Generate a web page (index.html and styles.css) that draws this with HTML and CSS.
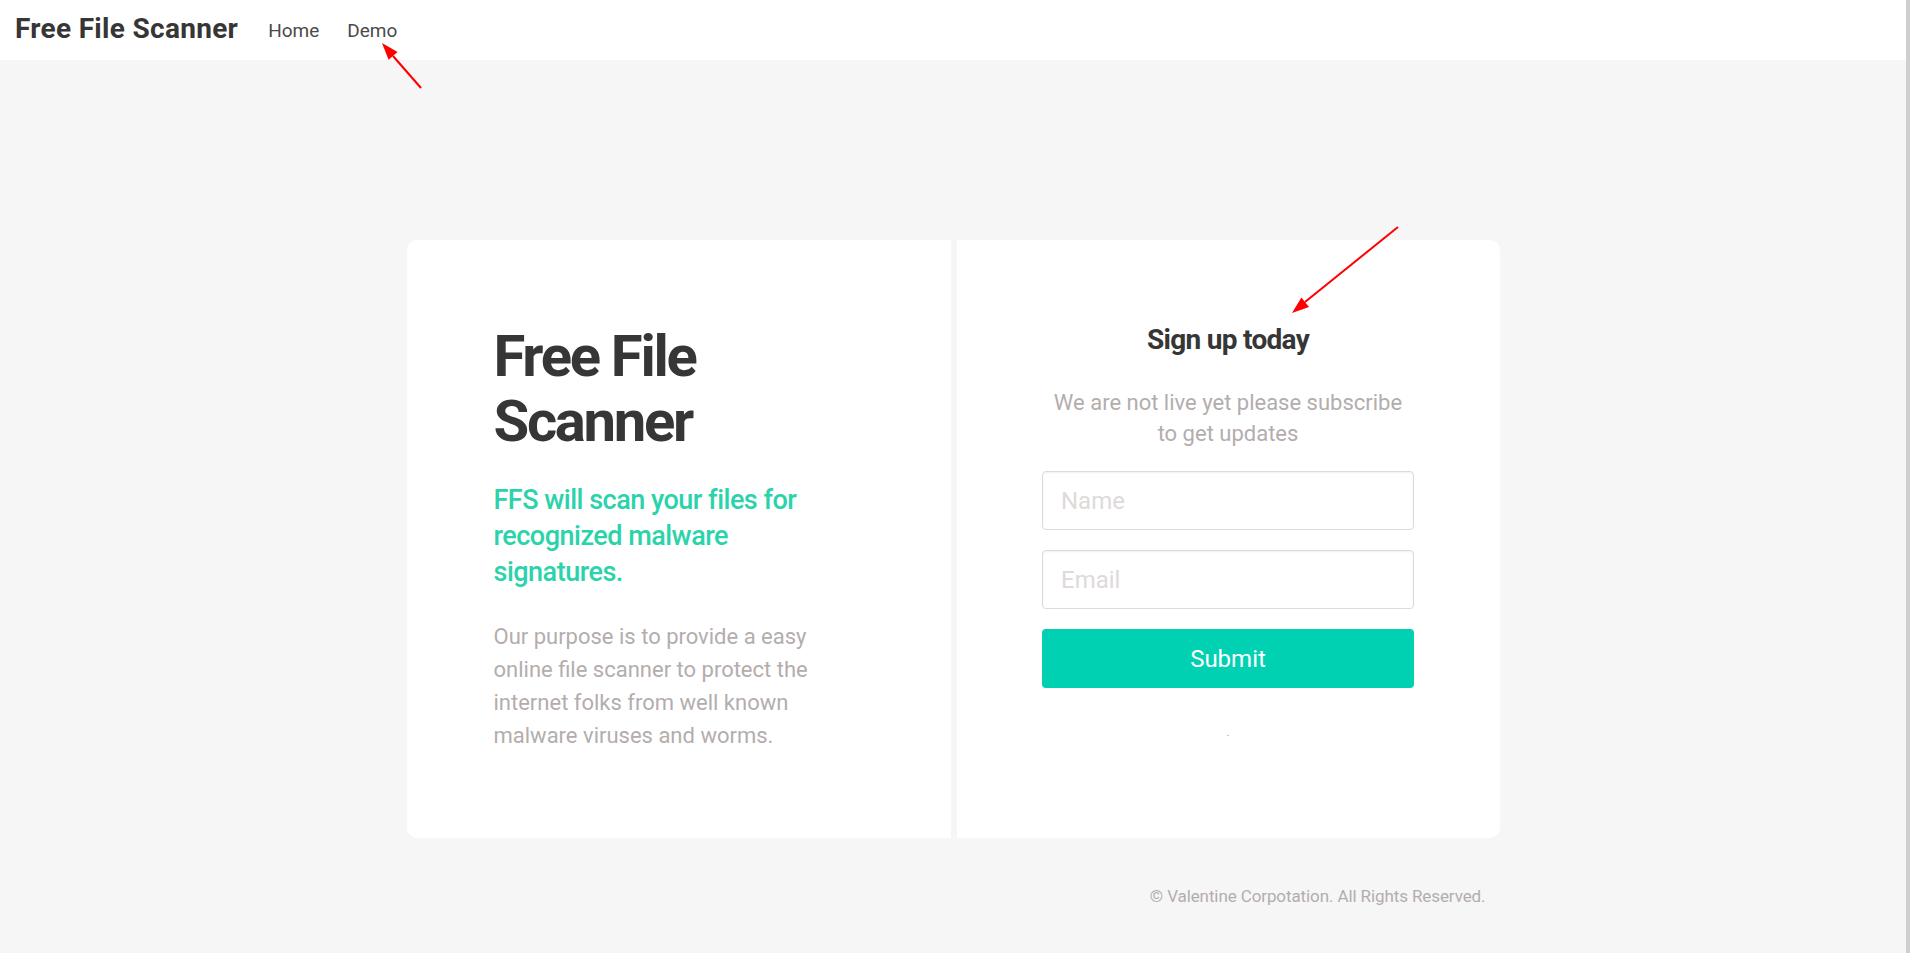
FILE: index.html
```html
<!DOCTYPE html>
<html lang="en">
<head>
  <meta charset="UTF-8">
  <meta name="viewport" content="width=device-width, initial-scale=1.0">
  <title>Free File Scanner</title>
  <link rel="stylesheet" href="styles.css">
</head>
<body>
  <header class="navbar">
    <a class="brand" href="#">Free File Scanner</a>
    <nav class="nav-links">
      <a href="#">Home</a>
      <a href="#">Demo</a>
    </nav>
  </header>

  <main class="page">
    <section class="card">
      <div class="intro">
        <div class="intro-text">
          <h1>Free File Scanner</h1>
          <h2>FFS will scan your files for recognized malware signatures.</h2>
          <p>Our purpose is to provide a easy online file scanner to protect the internet folks from well known malware viruses and worms.</p>
        </div>
      </div>

      <div class="signup">
        <h3>Sign up today</h3>
        <p class="signup-note">We are not live yet please subscribe to get updates</p>
        <form class="signup-form" onsubmit="return false;">
          <input class="field" type="text" placeholder="Name">
          <input class="field" type="email" placeholder="Email">
          <button class="submit-button" type="submit">Submit</button>
        </form>
        <p class="form-status">.</p>
      </div>
    </section>

    <footer class="footer">© Valentine Corpotation. All Rights Reserved.</footer>
  </main>

  <!-- red annotation arrows drawn over the page -->
  <svg class="annotations" width="1910" height="953" viewBox="0 0 1910 953">
    <line x1="421" y1="88" x2="393" y2="56" stroke="#ff0000" stroke-width="2"/>
    <polygon points="382,43 397.6,52 388.6,59.8" fill="#ff0000"/>
    <line x1="1398" y1="227" x2="1305" y2="302" stroke="#ff0000" stroke-width="2"/>
    <polygon points="1292,313 1301.4,297.6 1309,307" fill="#ff0000"/>
  </svg>
</body>
</html>
```

FILE: styles.css
```css
html {
  border-right: 4px solid #cfcfcf;
}

body {
  margin: 0;
  font-family: Roboto, "Liberation Sans", Arial, sans-serif;
  background-color: #f6f6f6;
  color: #4a4a4a;
  min-height: 953px;
}

a {
  text-decoration: none;
}

/* top bar */
.navbar {
  height: 60px;
  background-color: #fff;
  display: flex;
  align-items: center;
  padding-left: 15px;
}

.brand {
  font-size: 28px;
  font-weight: 700;
  letter-spacing: 0.3px;
  color: #363636;
  margin-bottom: 3px;
}

.nav-links {
  display: flex;
  gap: 28px;
  margin-left: 30px;
}

.nav-links a {
  font-size: 19px;
  color: #4a4a4a;
}

/* main card */
.page {
  padding-top: 180px;
}

.card {
  width: 1093px;
  height: 598px;
  margin: 0 auto;
  display: flex;
  gap: 6px;
}

.intro,
.signup {
  background-color: #fff;
  padding-top: 84px;
  box-sizing: border-box;
}

.intro {
  width: 544px;
  border-radius: 10px 0 0 10px;
  padding-left: 87px;
}

.intro-text {
  width: 340px;
}

.intro h1 {
  margin: 0;
  font-size: 58px;
  line-height: 65px;
  font-weight: 700;
  letter-spacing: -2.3px;
  color: #363636;
}

.intro h2 {
  margin: 28px 0 0;
  font-size: 27px;
  line-height: 36px;
  font-weight: 500;
  letter-spacing: -0.5px;
  color: #2bd3ab;
}

.intro p {
  margin: 30px 0 0;
  font-size: 22px;
  line-height: 33px;
  color: #b3adad;
}

.signup {
  width: 543px;
  border-radius: 0 10px 10px 0;
  text-align: center;
}

.signup h3 {
  margin: 0;
  font-size: 28px;
  line-height: 32px;
  font-weight: 700;
  letter-spacing: -0.7px;
  color: #363636;
}

.signup-note {
  max-width: 360px;
  margin: 31px auto 0;
  font-size: 22px;
  line-height: 31px;
  color: #b3adad;
}

.signup-form {
  width: 372px;
  margin: 22px auto 0;
  display: flex;
  flex-direction: column;
  gap: 20px;
}

.field {
  height: 59px;
  box-sizing: border-box;
  padding: 0 18px;
  border: 1px solid #dbdbdb;
  border-radius: 4px;
  box-shadow: inset 0 1px 2px rgba(10, 10, 10, 0.06);
  font-family: inherit;
  font-size: 24px;
  color: #363636;
  outline: none;
}

.field::placeholder {
  color: #dedada;
}

.submit-button {
  height: 59px;
  border: none;
  border-radius: 4px;
  background-color: #00d1b2;
  color: #fff;
  font-family: inherit;
  font-size: 24px;
  cursor: pointer;
}

.form-status {
  margin: 37px 0 0;
  font-size: 10px;
  line-height: 16px;
  color: #999;
}

.footer {
  width: 1093px;
  margin: 46px auto 0;
  box-sizing: border-box;
  padding-right: 14px;
  text-align: right;
  font-size: 17px;
  line-height: 24px;
  letter-spacing: -0.1px;
  color: #b3adad;
}

.annotations {
  position: absolute;
  top: 0;
  left: 0;
  pointer-events: none;
}
```
